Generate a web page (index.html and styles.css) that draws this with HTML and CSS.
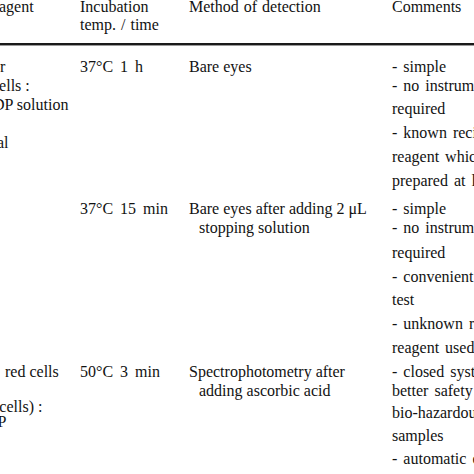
FILE: index.html
```html
<!DOCTYPE html>
<html lang="en">
<head>
<meta charset="utf-8">
<title>Table</title>
<link rel="stylesheet" href="styles.css">
</head>
<body>
<div class="table">
  <div class="row head">
    <div class="cell"><div class="hl cut-agent">agent</div></div>
    <div class="cell"><div class="hl">Incubation</div><div class="hl">temp. / time</div></div>
    <div class="cell"><div class="hl">Method of detection</div></div>
    <div class="cell"><div class="hl">Comments</div></div>
  </div>

  <div class="row r1">
    <div class="cell">
      <div class="ln">r</div>
      <div class="ln cut-cells">cells :</div>
      <div class="ln cut-dp">DP solution</div>
      <div class="ln">&nbsp;</div>
      <div class="ln cut-al">al</div>
    </div>
    <div class="cell temp"><div class="ln">37°C 1 h</div></div>
    <div class="cell"><div class="ln">Bare eyes</div></div>
    <div class="cell notes">
      <div class="ln">- simple</div>
      <div class="ln">- no instrument</div>
      <div class="ln m4">required</div>
      <div class="ln m5">- known recipe of</div>
      <div class="ln m5">reagent which is</div>
      <div class="ln m5">prepared at lab</div>
    </div>
  </div>

  <div class="row r2">
    <div class="cell"></div>
    <div class="cell temp"><div class="ln">37°C 15 min</div></div>
    <div class="cell">
      <div class="ln">Bare eyes after adding 2 μL</div>
      <div class="ln indent">stopping solution</div>
    </div>
    <div class="cell notes">
      <div class="ln">- simple</div>
      <div class="ln">- no instrument</div>
      <div class="ln m6">required</div>
      <div class="ln m5">- convenient for</div>
      <div class="ln m4">test</div>
      <div class="ln m5">- unknown recipe of</div>
      <div class="ln m5">reagent used</div>
    </div>
  </div>

  <div class="row r3">
    <div class="cell">
      <div class="ln cut-red">red cells</div>
      <div class="ln cut-cells2 m16">(cells) :</div>
      <div class="ln cut-p up4">DP</div>
    </div>
    <div class="cell temp"><div class="ln">50°C 3 min</div></div>
    <div class="cell">
      <div class="ln">Spectrophotometry after</div>
      <div class="ln indent">adding ascorbic acid</div>
    </div>
    <div class="cell notes">
      <div class="ln">- closed system,</div>
      <div class="ln">better safety for</div>
      <div class="ln m3">bio-hazardous</div>
      <div class="ln m4">samples</div>
      <div class="ln m4">- automatic data</div>
    </div>
  </div>
</div>
</body>
</html>
```

FILE: styles.css
```css
html, body {
  margin: 0;
  padding: 0;
  background: #ffffff;
  overflow: hidden;
}

body {
  width: 474px;
  height: 474px;
  font-family: "Liberation Serif", "Times New Roman", serif;
  font-size: 16px;
  color: #121212;
}

.table {
  margin-top: -2px;
}

.row {
  display: grid;
  grid-template-columns: 80px 109px 203px 82px;
  align-items: start;
}

.cell {
  white-space: nowrap;
  min-width: 0;
}

.temp {
  word-spacing: 3px;
}

.notes {
  word-spacing: 2px;
}

.head {
  padding-bottom: 9px;
  border-bottom: 2px solid #1a1a1a;
  box-shadow: 0 1px 0 #9a9a9a;
  word-spacing: 1px;
}

.hl {
  line-height: 18px;
  height: 18px;
}

.ln {
  line-height: 19px;
  height: 19px;
}

.r1 { padding-top: 12px; }
.r2 { padding-top: 9px; }
.r3 { padding-top: 5px; }

.m3 { margin-top: 3px; }
.m4 { margin-top: 4px; }
.m5 { margin-top: 5px; }
.m6 { margin-top: 6px; }
.m16 { margin-top: 16px; }
.up4 { margin-top: -4px; }

.indent { padding-left: 10px; }

.cut-agent { text-indent: -1px; }
.cut-cells { text-indent: -8px; }
.cut-dp { text-indent: -7px; }
.cut-al { text-indent: -3px; }
.cut-red { text-indent: 5px; }
.cut-cells2 { text-indent: -6px; }
.cut-p { text-indent: -14px; }
```
